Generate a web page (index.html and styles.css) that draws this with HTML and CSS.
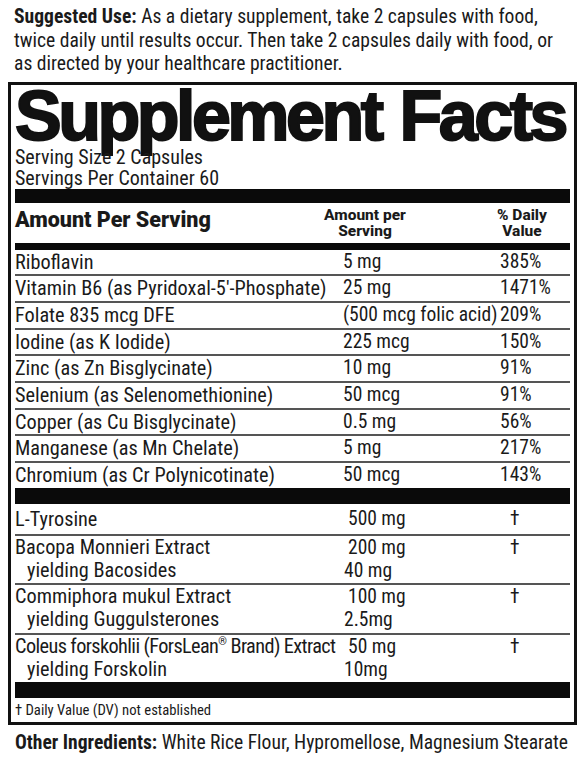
FILE: index.html
```html
<!DOCTYPE html>
<html lang="en">
<head>
  <meta charset="UTF-8" />
  <meta name="viewport" content="width=device-width, initial-scale=1.0"/>
  <title>Supplement Facts</title>
  <link rel="stylesheet" href="styles.css">
</head>
<body>

<p class="use"><b>Suggested Use:</b> As a dietary supplement, take 2 capsules with food,<br>
twice daily until results occur. Then take 2 capsules daily with food, or<br>
as directed by your healthcare practitioner.</p>

<div class="facts">
  <h1>Supplement Facts</h1>
  <div class="serving">
    <div>Serving Size 2 Capsules</div>
    <div>Servings Per Container 60</div>
  </div>
  <div class="bar thick"></div>

  <div class="row head">
    <div class="big">Amount Per Serving</div>
    <div class="small">Amount per<br>Serving</div>
    <div class="small">% Daily<br>Value</div>
  </div>
  <div class="bar"></div>

  <div class="rows">
    <div class="row"><div class="name">Riboflavin</div><div>5 mg</div><div>385%</div></div>
    <div class="row"><div class="name">Vitamin B6 (as Pyridoxal-5′-Phosphate)</div><div>25 mg</div><div>1471%</div></div>
    <div class="row"><div class="name">Folate 835 mcg DFE</div><div>(500 mcg folic acid)</div><div>209%</div></div>
    <div class="row"><div class="name">Iodine (as K Iodide)</div><div>225 mcg</div><div>150%</div></div>
    <div class="row"><div class="name">Zinc (as Zn Bisglycinate)</div><div>10 mg</div><div>91%</div></div>
    <div class="row"><div class="name">Selenium (as Selenomethionine)</div><div>50 mcg</div><div>91%</div></div>
    <div class="row"><div class="name">Copper (as Cu Bisglycinate)</div><div>0.5 mg</div><div>56%</div></div>
    <div class="row"><div class="name">Manganese (as Mn Chelate)</div><div>5 mg</div><div>217%</div></div>
    <div class="row"><div class="name">Chromium (as Cr Polynicotinate)</div><div>50 mcg</div><div>143%</div></div>
  </div>
  <div class="bar heavy"></div>

  <div class="rows other">
    <div class="row single"><div class="name">L-Tyrosine</div><div>500 mg</div><div>†</div></div>
    <div class="row">
      <div class="name">Bacopa Monnieri Extract<span class="sub">yielding Bacosides</span></div>
      <div>200 mg<span class="sub amt">40 mg</span></div>
      <div>†</div>
    </div>
    <div class="row">
      <div class="name">Commiphora mukul Extract<span class="sub">yielding Guggulsterones</span></div>
      <div>100 mg<span class="sub amt">2.5mg</span></div>
      <div>†</div>
    </div>
    <div class="row">
      <div class="name"><span class="tight">Coleus forskohlii (ForsLean<sup>®</sup> Brand) Extract</span><span class="sub">yielding Forskolin</span></div>
      <div>50 mg<span class="sub amt">10mg</span></div>
      <div>†</div>
    </div>
  </div>
  <div class="bar heavy"></div>

  <p class="note">† Daily Value (DV) not established</p>
</div>

<p class="ingredients"><b>Other Ingredients:</b> White Rice Flour, Hypromellose, Magnesium Stearate</p>

</body>
</html>
```

FILE: styles.css
```css
body {
  margin: 0;
  font-family: Roboto, 'Noto Sans', sans-serif;
  font-stretch: 75%;
  font-size: 19.6px;
  color: #1a1a1a;
  background-color: white;
}
b {
  font-weight: bold;
  font-stretch: 82%;
}
.use {
  margin: 0;
  padding: 5px 14px 0 14px;
  line-height: 23.5px;
  white-space: nowrap;
}
.facts {
  margin: 6px 6px 0 8px;
  border: 3px solid #111;
  padding: 0 4px;
}
.facts h1 {
  margin: 0;
  font-family: 'Liberation Sans', Arial, sans-serif;
  font-stretch: normal;
  font-size: 70px;
  font-weight: bold;
  letter-spacing: -3.5px;
  word-spacing: 3px;
  white-space: nowrap;
  line-height: 62px;
  color: #111;
  -webkit-text-stroke: 2px #111;
}
.serving {
  font-size: 20px;
  line-height: 21px;
}
.bar {
  height: 7px;
  background-color: #0a0a0a;
}
.bar.thick {
  height: 14px;
}
.bar.heavy {
  height: 16px;
}
.row {
  display: grid;
  grid-template-columns: 328px 157px 1fr;
  font-size: 19.5px;
  line-height: 24.7px;
  white-space: nowrap;
}
.row .name {
  font-size: 20.3px;
}
.rows .row + .row {
  border-top: 2px solid #555;
}
.row.head {
  align-items: start;
  height: 33px;
  padding: 4px 0 3px;
}
.head .big {
  font-weight: 900;
  font-stretch: 100%;
  font-size: 21.5px;
  line-height: 26px;
}
.head .small {
  font-weight: 800;
  font-stretch: 90%;
  font-size: 15.5px;
  line-height: 16.5px;
  text-align: center;
}
.head .small:nth-child(2) {
  margin-left: -28px;
  width: 100px;
}
.head .small:nth-child(3) {
  margin-left: -18px;
  width: 80px;
}
.other .row {
  grid-template-columns: 333px 162px 1fr;
  line-height: 23px;
  padding: 0 0 1.5px;
}
.other .row.single {
  line-height: 24px;
  padding: 3px 0;
}
.sub {
  display: block;
  padding-left: 12px;
}
.sub.amt {
  padding-left: 0;
  margin-left: -4px;
}
.tight {
  letter-spacing: -0.6px;
}
.tight sup {
  font-size: 11px;
  line-height: 0;
}
.note {
  margin: 0;
  font-size: 14.7px;
  line-height: 24px;
}
.ingredients {
  margin: 0;
  padding: 6px 0 0;
  line-height: 24px;
  text-align: center;
}
```
